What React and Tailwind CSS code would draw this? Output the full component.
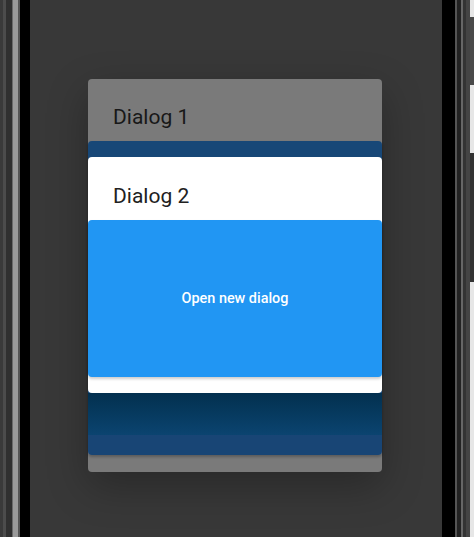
import React from "react";

export default function App() {
  return (
    <div
      className="flex h-[537px] w-[474px] overflow-hidden bg-[#383838]"
      style={{ fontFamily: "Roboto, 'Liberation Sans', sans-serif" }}
    >
      {/* left bezel */}
      <div className="flex h-full w-[30px] shrink-0">
        <div className="w-[3px] bg-[#3a3a3a]" />
        <div className="w-[3px] bg-[#4c4c4c]" />
        <div className="w-[6px] bg-[#303030]" />
        <div className="w-[1px] bg-[#6a6a6a]" />
        <div className="w-[5px] bg-[#9a9a9a]" />
        <div className="w-[2px] bg-[#555555]" />
        <div className="w-[10px] bg-black" />
      </div>

      {/* screen */}
      <div className="relative h-full w-[412px] shrink-0 bg-[#383838]">
        <div className="pl-[58px] pt-[79px]">
          {/* dimmed dialog 1 */}
          <div className="flex w-[294px] flex-col rounded-[4px] bg-[#7a7a7a] pb-[17px] shadow-[0_14px_40px_rgba(0,0,0,0.28)]">
            <div className="pl-[25px] pr-6 pt-6 text-[21px] leading-[28px] text-[#181818]">
              Dialog 1
            </div>
            <div className="mt-[10px] flex h-[314px] flex-col overflow-hidden rounded-[4px] shadow-[0_2px_3px_rgba(0,0,0,0.25)]">
              <div className="flex-1 bg-[#174777]" />
              <div className="h-[42px] bg-gradient-to-b from-[#03304f] to-[#0b4470]" />
              <div className="h-[20px] bg-[#184575]" />
            </div>
          </div>
        </div>

        {/* dialog 2 */}
        <div className="absolute left-[58px] top-[157px] flex w-[294px] flex-col rounded-[4px] bg-white pb-[16px]">
          <div className="pl-[25px] pr-6 pt-[25px] text-[21px] leading-[28px] text-[#212121]">
            Dialog 2
          </div>
          <button className="mt-[10px] flex h-[157px] items-center justify-center rounded-[4px] bg-[#2196f3] text-[14.4px] font-medium text-white shadow-[0_2px_3px_rgba(0,0,0,0.2)]">
            Open new dialog
          </button>
        </div>
      </div>

      {/* right bezel */}
      <div className="flex h-full flex-1">
        <div className="w-[13px] bg-black" />
        <div className="w-[2px] bg-[#555555]" />
        <div className="w-[4px] bg-[#222222]" />
        <div className="w-[2px] bg-[#666666]" />
        <div className="w-[3px] bg-[#333333]" />
        <div className="w-[4px] bg-[#444444]" />
        <div className="flex flex-1 flex-col">
          <div className="h-[17px] bg-[#e6e6e6]" />
          <div className="h-[68px] bg-[#4a4a4a]" />
          <div className="h-[68px] bg-[#e6e6e6]" />
          <div className="h-[129px] bg-[#333333]" />
          <div className="flex-1 bg-[#e6e6e6]" />
        </div>
      </div>
    </div>
  );
}
